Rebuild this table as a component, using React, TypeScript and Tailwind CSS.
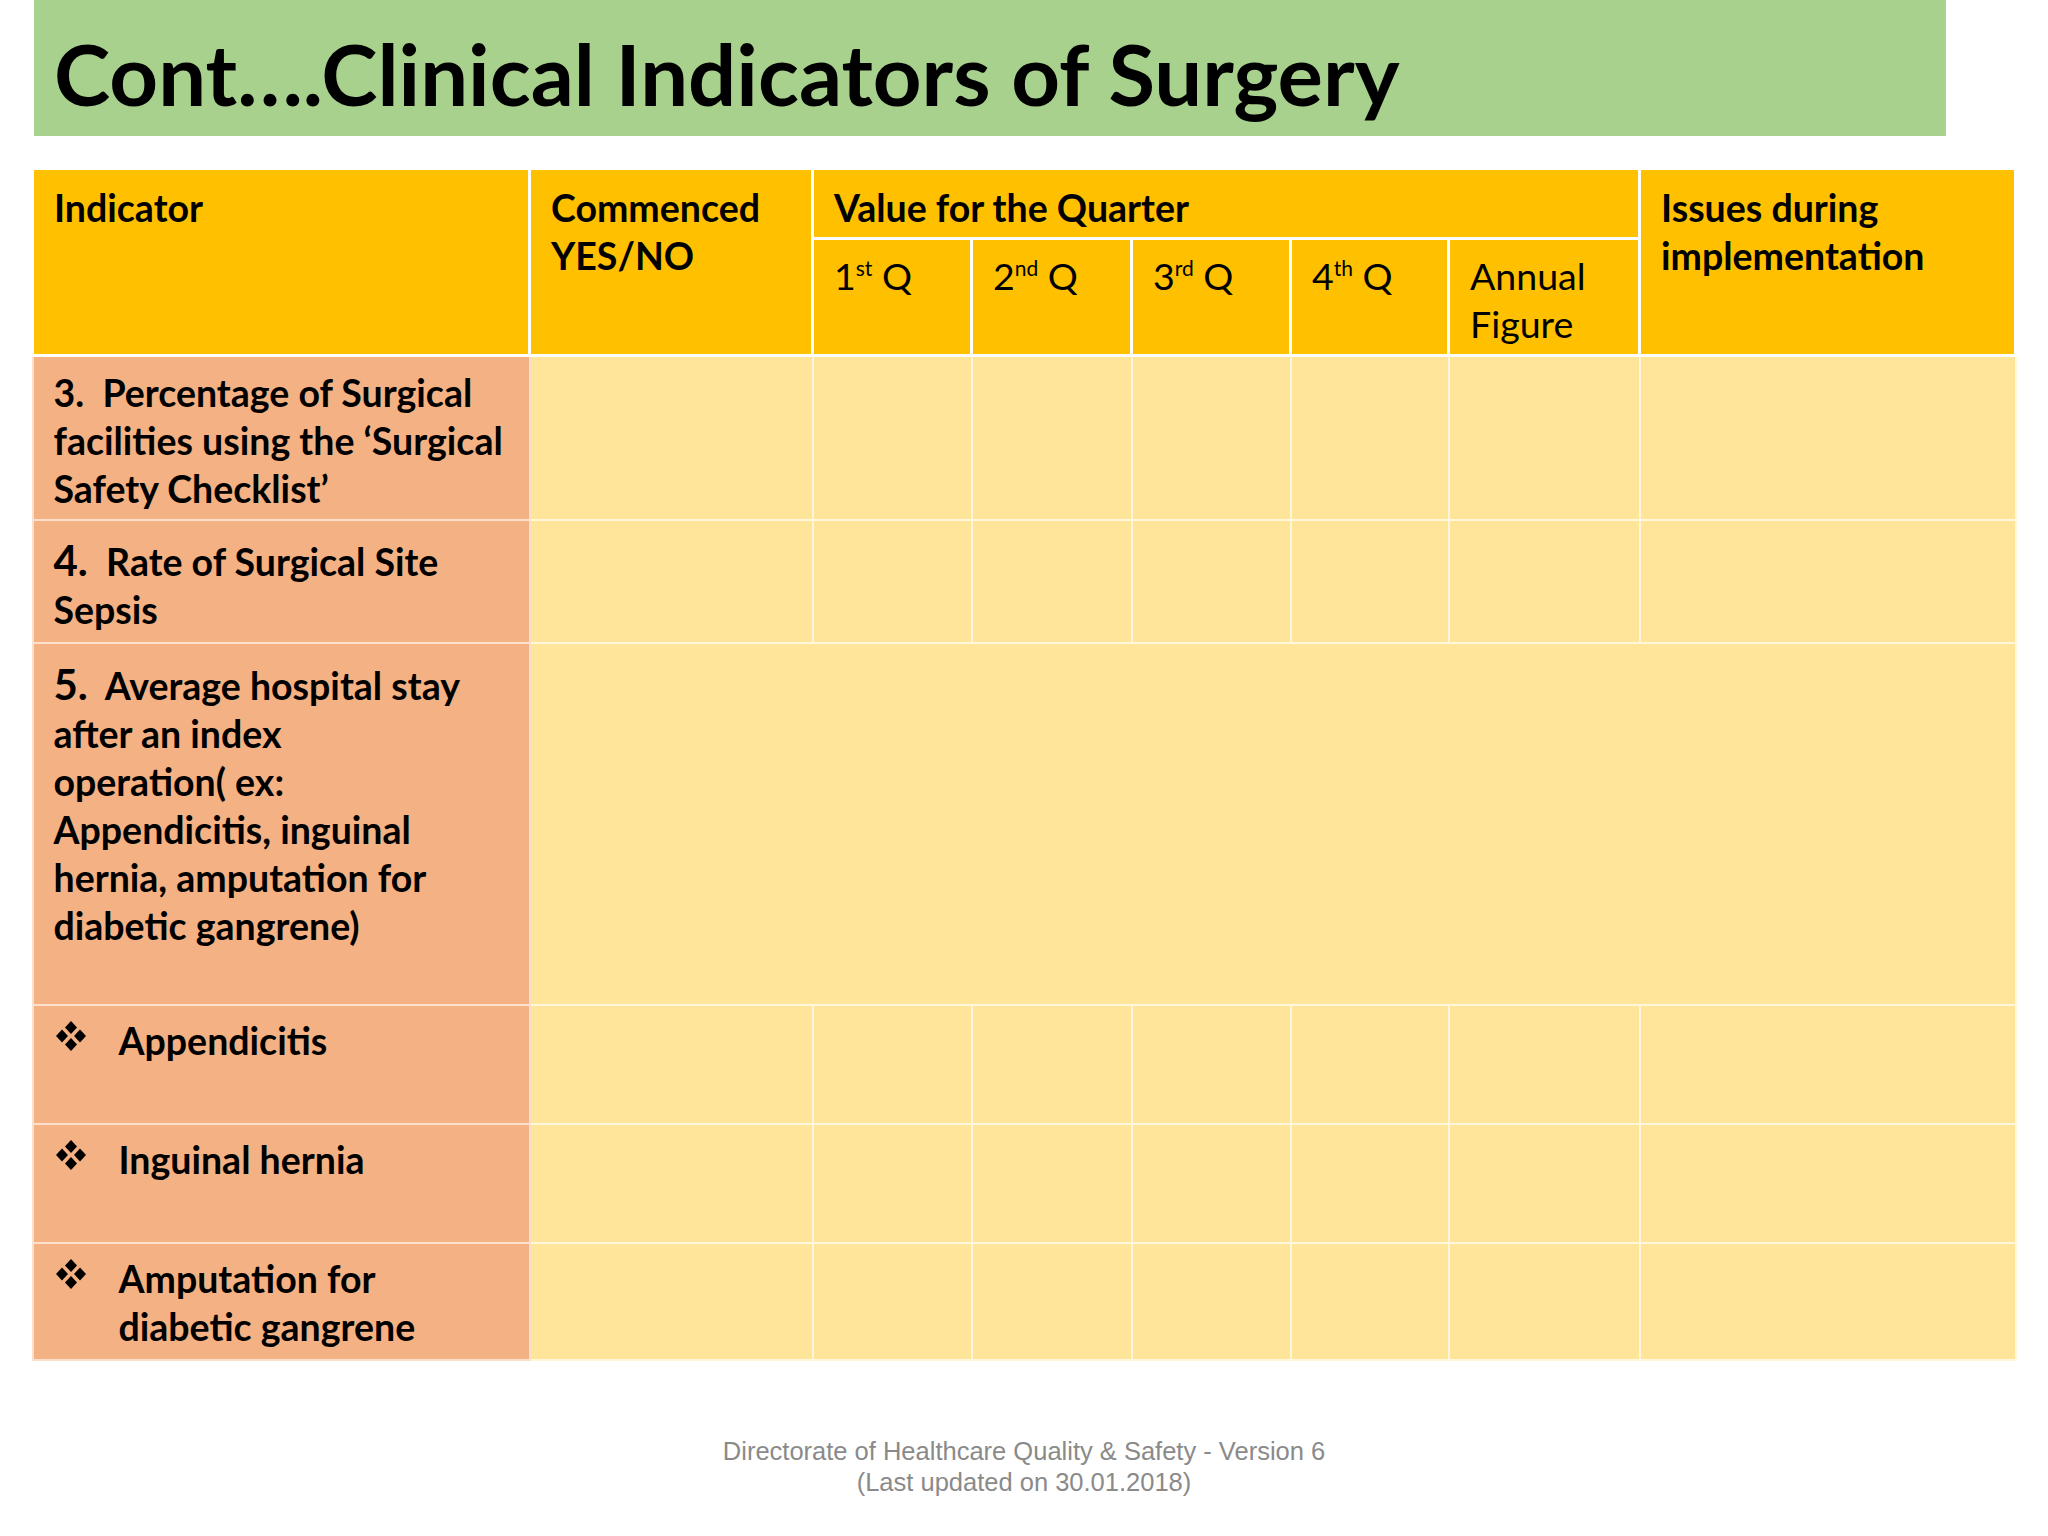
import React from "react";

const cellText = "font-['Lato',sans-serif] text-[37.5px] leading-[48px] text-black";

function Bullet() {
  return (
    <svg width="30" height="30" viewBox="0 0 30 30" className="shrink-0 mt-[4px]">
      <path d="M15 0 L21 6.5 L15 13 L9 6.5 Z" fill="#000" />
      <path d="M6 8.5 L12 15 L6 21.5 L0 15 Z" fill="#000" />
      <path d="M24 8.5 L30 15 L24 21.5 L18 15 Z" fill="#000" />
      <path d="M15 17 L21 23.5 L15 30 L9 23.5 Z" fill="#000" />
    </svg>
  );
}

function Ord({ n, s }: { n: string; s: string }) {
  return (
    <span>
      {n}
      <span className="relative -top-[14px] text-[21px] leading-none">{s}</span> Q
    </span>
  );
}

const hdBase = "border-[3px] border-white bg-[#ffc000] align-top px-[20px] text-left";
const hd = `${hdBase} pt-[14px]`;
const hd2 = `${hdBase} pt-[12px] font-normal`;
const bd = "border-2 border-[#fff6dc] bg-[#fee59a] align-top";
const ind = "border-2 border-[#fbe0cc] bg-[#f4b183] align-top";

function EmptyCells() {
  return (
    <>
      {Array.from({ length: 7 }).map((_, i) => (
        <td key={i} className={bd}></td>
      ))}
    </>
  );
}

function BulletRow({ lines, h }: { lines: string[]; h: string }) {
  return (
    <tr className={h}>
      <td className={`${ind} pl-[22px] pt-[11px]`}>
        <div className="flex gap-[33px]">
          <Bullet />
          <div className="font-bold whitespace-nowrap">
            {lines.map((l, i) => (
              <div key={i}>{l}</div>
            ))}
          </div>
        </div>
      </td>
      <EmptyCells />
    </tr>
  );
}

export default function App() {
  return (
    <div className="w-[2048px] h-[1536px] bg-white overflow-hidden">
      <div className="ml-[34px] w-[1912px] h-[136px] bg-[#a9d18e] pl-[20px] pt-[23px]">
        <h1 className="font-['Lato',sans-serif] font-bold text-[85px] leading-[100px] text-black whitespace-nowrap">
          Cont….Clinical Indicators of Surgery
        </h1>
      </div>

      <table className={`ml-[31px] mt-[31px] w-[1983px] table-fixed border-collapse ${cellText}`}>
        <colgroup>
          <col className="w-[497px]" />
          <col className="w-[283px]" />
          <col className="w-[159px]" />
          <col className="w-[160px]" />
          <col className="w-[159px]" />
          <col className="w-[158px]" />
          <col className="w-[191px]" />
          <col className="w-[376px]" />
        </colgroup>
        <thead>
          <tr className="h-[70px]">
            <th rowSpan={2} className={`${hd} font-bold`}>Indicator</th>
            <th rowSpan={2} className={`${hd} font-bold`}>
              Commenced
              <br />
              YES/NO
            </th>
            <th colSpan={5} className={`${hd} font-bold`}>Value for the Quarter</th>
            <th rowSpan={2} className={`${hd} font-bold`}>
              Issues during
              <br />
              implementation
            </th>
          </tr>
          <tr className="h-[117px]">
            <th className={hd2}><Ord n="1" s="st" /></th>
            <th className={hd2}><Ord n="2" s="nd" /></th>
            <th className={hd2}><Ord n="3" s="rd" /></th>
            <th className={hd2}><Ord n="4" s="th" /></th>
            <th className={hd2}>
              Annual
              <br />
              Figure
            </th>
          </tr>
        </thead>
        <tbody>
          <tr className="h-[164.5px]">
            <td className={`${ind} pl-[20px] pt-[12px] font-bold whitespace-nowrap`}>
              3.&nbsp; Percentage of Surgical
              <br />
              facilities using the ‘Surgical
              <br />
              Safety Checklist’
            </td>
            <EmptyCells />
          </tr>
          <tr className="h-[122.5px]">
            <td className={`${ind} pl-[20px] pt-[15px] font-bold whitespace-nowrap`}>
              <span className="text-[42px]">4.</span>&nbsp; Rate of Surgical Site
              <br />
              Sepsis
            </td>
            <EmptyCells />
          </tr>
          <tr className="h-[362px]">
            <td className={`${ind} pl-[20px] pt-[16px] font-bold whitespace-nowrap`}>
              <span className="text-[42px]">5.</span>&nbsp; Average hospital stay
              <br />
              after an index
              <br />
              operation( ex:
              <br />
              Appendicitis, inguinal
              <br />
              hernia, amputation for
              <br />
              diabetic gangrene)
            </td>
            <td colSpan={7} className={bd}></td>
          </tr>
          <BulletRow lines={["Appendicitis"]} h="h-[119px]" />
          <BulletRow lines={["Inguinal hernia"]} h="h-[119px]" />
          <BulletRow lines={["Amputation for", "diabetic gangrene"]} h="h-[117px]" />
        </tbody>
      </table>

      <div className="mt-[75px] text-center font-['Liberation_Sans',Arial,sans-serif] text-[25.5px] leading-[31px] text-[#8a8a8a]">
        <div>Directorate of Healthcare Quality &amp; Safety - Version 6</div>
        <div>(Last updated on 30.01.2018)</div>
      </div>
    </div>
  );
}
